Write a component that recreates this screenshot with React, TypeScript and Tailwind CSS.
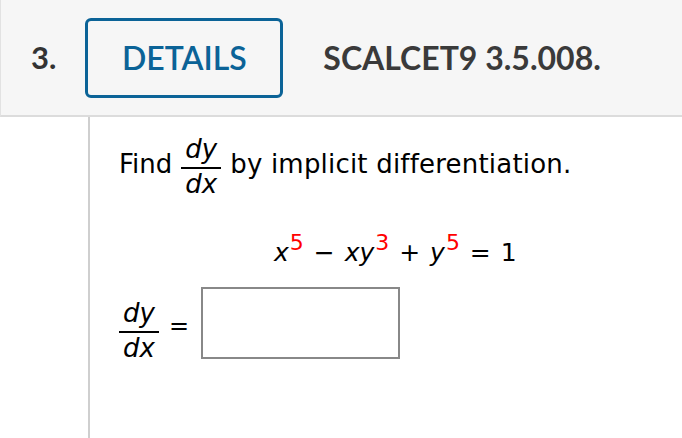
function Frac({ top, bottom }: { top: string; bottom: string }) {
  return (
    <span className="inline-flex flex-col items-stretch">
      <span className="text-center italic leading-none text-[26px] px-[4px] pb-[5px]">{top}</span>
      <span className="h-[2px] bg-black" />
      <span className="text-center italic leading-none text-[26px] px-[4px] pt-[2px]">{bottom}</span>
    </span>
  )
}

export default function App() {
  return (
    <div className="w-[682px] h-[438px] overflow-hidden bg-white flex flex-col">
      <div className="h-[117px] shrink-0 bg-[#f6f6f6] border-b-2 border-[#dcdcdc] border-l border-l-[#e2e2e2] flex items-center font-['Lato',sans-serif]">
        <span className="ml-[30px] text-[31px] font-bold text-[#333]">3.</span>
        <div className="ml-[29px] w-[198px] h-[80px] border-[3px] border-[#0b6397] rounded-[6px] flex items-center justify-center">
          <span className="text-[32px] font-semibold text-[#0b6397]">DETAILS</span>
        </div>
        <span className="ml-[40px] text-[32px] font-bold text-[#3a3a3a]">SCALCET9 3.5.008.</span>
      </div>
      <div className="flex flex-1">
        <div className="w-[88px] shrink-0" />
        <div className="flex-1 border-l-2 border-[#cfcfcf] pl-[29px] font-['DejaVu_Sans','Verdana',sans-serif] text-black">
          <div className="mt-[15px] flex items-center text-[26px]">
            <span>Find</span>
            <span className="ml-[9px] mt-[4px] flex">
              <Frac top="dy" bottom="dx" />
            </span>
            <span className="ml-[9px] tracking-[0.2px]">by implicit differentiation.</span>
          </div>
          <div className="mt-[43px] ml-[155px] text-[25px] leading-none whitespace-pre [word-spacing:2px]">
            <span className="italic">x</span>
            <sup className="ml-[1px] -top-[11px] text-[#ff0000] text-[22px]">5</sup>
            {' − '}
            <span className="italic">xy</span>
            <sup className="ml-[1px] -top-[11px] text-[#ff0000] text-[22px]">3</sup>
            {' + '}
            <span className="italic">y</span>
            <sup className="ml-[1px] -top-[11px] text-[#ff0000] text-[22px]">5</sup>
            {' = 1'}
          </div>
          <div className="mt-[22px] flex items-start">
            <span className="mt-[13px] flex">
              <Frac top="dy" bottom="dx" />
            </span>
            <span className="mt-[27px] ml-[10px] text-[24px] leading-none">=</span>
            <div className="ml-[12px] w-[199px] h-[72px] border-2 border-[#888]" />
          </div>
        </div>
      </div>
    </div>
  )
}
